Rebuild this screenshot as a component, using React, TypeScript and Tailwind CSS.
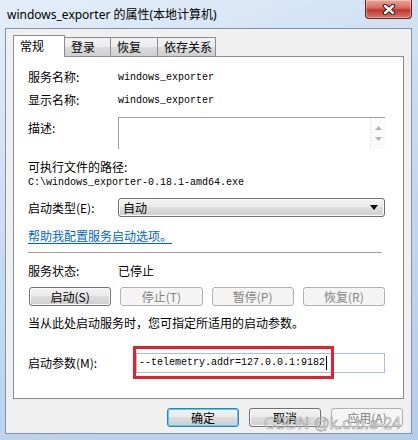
import React from 'react';

const cjk = "font-['Noto_Sans_CJK_SC','Noto_Sans',sans-serif]";
const mono = "font-['Liberation_Mono','Noto_Sans_CJK_SC',monospace]";
const btn = 'h-[19px] rounded-[3px] border text-[12px] leading-[16px] flex items-center justify-center';
const btnOn = 'border-[#707070] bg-[linear-gradient(#f2f2f2,#ebebeb_45%,#dddddd_50%,#cfcfcf)] shadow-[inset_0_0_0_1px_#fbfbfb] text-black';
const btnOff = 'border-[#adb2b5] bg-[#f4f4f4] text-[#838383]';

function CloseButton() {
  return (
    <div className="ml-auto mr-[6px] w-[47px] h-[19px] rounded-b-[4px] border border-t-0 border-[#5d2620] bg-[linear-gradient(#e9a799,#d46b5e_45%,#c1362a_55%,#d5786b)] shadow-[inset_0_0_0_1px_rgba(255,255,255,0.35)] flex items-center justify-center">
      <svg width="14" height="11" viewBox="0 0 14 11">
        <path d="M3 2 L11 9 M11 2 L3 9" stroke="#4a1d18" strokeWidth="4.5" strokeLinecap="round" />
        <path d="M3 2 L11 9 M11 2 L3 9" stroke="#ffffff" strokeWidth="2.4" strokeLinecap="round" />
      </svg>
    </div>
  );
}

function Tab({ label, active, w }: { label: string; active?: boolean; w: string }) {
  if (active) {
    return (
      <div className={`${w} h-[22px] relative z-10 border border-b-0 border-[#898c95] bg-white pl-[6px] text-[12px] leading-[20px] text-black`}>
        {label}
      </div>
    );
  }
  return (
    <div className={`${w} h-[20px] -ml-px border border-[#898c95] bg-[linear-gradient(#f3f3f3,#ebebeb_50%,#dddddd_50%,#cfcfcf)] pl-[6px] text-[12px] leading-[18px] text-black`}>
      {label}
    </div>
  );
}

export default function App() {
  return (
    <div className={`w-[418px] h-[440px] flex flex-col bg-[linear-gradient(160deg,#e4eef9,#c9dcf1_40%,#b4cde9)] ${cjk}`}>
      {/* title bar */}
      <div className="h-[28px] flex items-start">
        <div className="pl-[7px] pt-[6px] text-[12px] leading-[18px] text-black font-['Noto_Sans','Noto_Sans_CJK_SC',sans-serif]">
          windows_exporter 的属性(本地计算机)
        </div>
        <CloseButton />
      </div>

      {/* client area */}
      <div className="ml-[5px] mr-[6px] h-[406px] border border-[#7e93ad] bg-[#f0f0f0] pt-[6px] pl-[7px] pr-[7px] flex flex-col">
        <div className="flex items-end h-[22px] -mb-px relative z-10">
          <Tab label="常规" active w="w-[52px]" />
          <Tab label="登录" w="w-[47px]" />
          <Tab label="恢复" w="w-[48px]" />
          <Tab label="依存关系" w="w-[59px]" />
        </div>

        {/* panel */}
        <div className="h-[343px] border border-[#898c95] bg-white pl-[14px] pr-[18px] flex flex-col text-[12px] text-black">
          <div className="mt-[11px] h-[18px] flex items-center">
            <div className="w-[90px] leading-[18px]">服务名称:</div>
            <div className={`${mono} text-[10px]`}>windows_exporter</div>
          </div>
          <div className="mt-[5px] h-[18px] flex items-center">
            <div className="w-[90px] leading-[18px]">显示名称:</div>
            <div className={`${mono} text-[10px]`}>windows_exporter</div>
          </div>
          <div className="mt-[8px] h-[32px] flex items-start">
            <div className="w-[90px] pt-[2px] leading-[18px]">描述:</div>
            <div className="flex-1 h-[32px] border-t border-l border-[#a0a0a0] flex justify-end">
              <div className="w-[15px] h-[31px] bg-[#fafafa] border-l border-[#ececec] flex flex-col items-center justify-center gap-[7px]">
                <svg width="7" height="4" viewBox="0 0 7 4"><path d="M0 4 L3.5 0 L7 4 Z" fill="#b4b4b4" /></svg>
                <svg width="7" height="4" viewBox="0 0 7 4"><path d="M0 0 L3.5 4 L7 0 Z" fill="#b4b4b4" /></svg>
              </div>
            </div>
          </div>
          <div className="mt-[9px] leading-[18px]">可执行文件的路径:</div>
          <div className={`${mono} text-[10px] leading-[14px]`}>C:\windows_exporter-0.18.1-amd64.exe</div>
          <div className="mt-[8px] h-[19px] flex items-center">
            <div className="w-[90px] leading-[18px]">启动类型(E):</div>
            <div className={`flex-1 h-[19px] rounded-[3px] border leading-[16px] flex items-center justify-between pl-[4px] pr-[6px] ${btnOn}`}>
              <span>自动</span>
              <svg width="8" height="5" viewBox="0 0 8 5"><path d="M0 0 L8 0 L4 5 Z" fill="#000" /></svg>
            </div>
          </div>
          <div className="mt-[10px] leading-[18px]">
            <span className="text-[#0066cc] underline underline-offset-2">帮助我配置服务启动选项。</span>
          </div>
          <div className="mt-[7px] h-px bg-[#a0a0a0] mr-[3px]" />
          <div className="mt-[9px] h-[18px] flex items-center">
            <div className="w-[90px] leading-[18px]">服务状态:</div>
            <div className="leading-[18px]">已停止</div>
          </div>
          <div className="mt-[7px] grid grid-cols-4 gap-[9px] ml-px">
            <div className={`${btn} ${btnOn}`}>启动(S)</div>
            <div className={`${btn} ${btnOff}`}>停止(T)</div>
            <div className={`${btn} ${btnOff}`}>暂停(P)</div>
            <div className={`${btn} ${btnOff}`}>恢复(R)</div>
          </div>
          <div className="mt-[8px] leading-[18px]">当从此处启动服务时，您可指定所适用的启动参数。</div>
          <div className="mt-[21px] h-[20px] flex items-center">
            <div className="w-[108px] leading-[18px]">启动参数(M):</div>
            <div className="relative flex-1 h-[20px] border border-[#a7bfdb] bg-white flex items-center pl-[2px]">
              <span className={`${mono} text-[10px] leading-[14px]`}>--telemetry.addr=127.0.0.1:9182</span>
              <span className="ml-px w-px h-[14px] bg-black" />
              <div className="absolute left-[-4px] top-[-8px] w-[201px] h-[33px] border-[3px] border-[#e4202a]" />
            </div>
          </div>
        </div>

        {/* dialog buttons */}
        <div className="relative mt-[9px] flex justify-end gap-[10px] pr-px">
          <div className={`w-[72px] ${btn} border-[#3c7fb1] bg-[linear-gradient(#f2f2f2,#ebebeb_45%,#dddddd_50%,#cfcfcf)] shadow-[inset_0_0_0_1px_#48d2f9] text-black`}>确定</div>
          <div className={`w-[72px] ${btn} ${btnOn}`}>取消</div>
          <div className={`w-[72px] ${btn} ${btnOff}`}>应用(A)</div>
          <div className="absolute right-[3px] top-[8px] text-[16px] leading-[16px] text-white/50 [-webkit-text-stroke:0.6px_#9a9a9a] font-['Liberation_Sans',sans-serif] pointer-events-none">
            CSDN @k.o.b.e-24
          </div>
        </div>
      </div>
    </div>
  );
}
